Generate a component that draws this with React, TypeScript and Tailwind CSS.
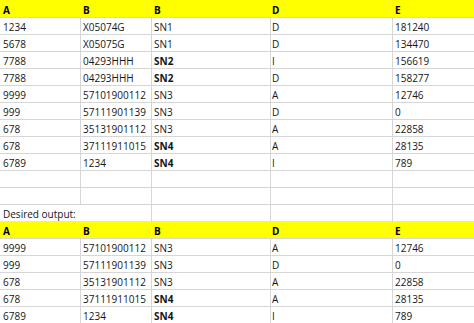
import React from "react";

type Row = [string, string, string, boolean, string, string];

const top: Row[] = [
  ["1234", "X05074G", "SN1", false, "D", "181240"],
  ["5678", "X05075G", "SN1", false, "D", "134470"],
  ["7788", "04293HHH", "SN2", true, "I", "156619"],
  ["7788", "04293HHH", "SN2", true, "D", "158277"],
  ["9999", "57101900112", "SN3", false, "A", "12746"],
  ["999", "57111901139", "SN3", false, "D", "0"],
  ["678", "35131901112", "SN3", false, "A", "22858"],
  ["678", "37111911015", "SN4", true, "A", "28135"],
  ["6789", "1234", "SN4", true, "I", "789"],
];

const bottom: Row[] = top.slice(4);

const gridCols = "grid grid-cols-[81px_71px_119px_122px_1fr]";

function Header() {
  return (
    <div className={`${gridCols} h-[17px] bg-[#ffff00] font-bold text-black leading-[12px] pt-[3.5px]`}>
      <div className="pl-[3px]">A</div>
      <div className="pl-[2px]">B</div>
      <div className="pl-[2px]">B</div>
      <div className="pl-[1px]">D</div>
      <div className="pl-[2px]">E</div>
    </div>
  );
}

function DataRow({ r }: { r: Row }) {
  const cell = "border-r border-[#d6d6d6] pt-[3px] whitespace-nowrap";
  return (
    <div className={`${gridCols} h-[17px] border-t border-[#d6d6d6] leading-[12px]`}>
      <div className={`${cell} pl-[3px]`}>{r[0]}</div>
      <div className={`${cell} pl-[2px]`}>{r[1]}</div>
      <div className={`${cell} pl-[2px] ${r[3] ? "font-bold" : ""}`}>{r[2]}</div>
      <div className={`${cell} pl-[1px]`}>{r[4]}</div>
      <div className="pt-[3px] pl-[2px]">{r[5]}</div>
    </div>
  );
}

function EmptyRow({ label }: { label?: string }) {
  const cell = "border-r border-[#d6d6d6] pt-[3px] whitespace-nowrap";
  return (
    <div className={`${gridCols} h-[17px] border-t border-[#d6d6d6] leading-[12px]`}>
      {label ? (
        <div className={`${cell} col-span-2 pl-[3px]`}>{label}</div>
      ) : (
        <>
          <div className={cell}></div>
          <div className={cell}></div>
        </>
      )}
      <div className={cell}></div>
      <div className={cell}></div>
      <div></div>
    </div>
  );
}

export default function App() {
  return (
    <div
      className="w-[474px] h-[323px] overflow-hidden bg-white text-[10px] text-[#161616]"
      style={{ fontFamily: "'Open Sans', Lato, sans-serif" }}
    >
      <Header />
      {top.map((r, i) => (
        <DataRow key={"t" + i} r={r} />
      ))}
      <EmptyRow />
      <EmptyRow />
      <EmptyRow label="Desired output:" />
      <Header />
      {bottom.map((r, i) => (
        <DataRow key={"b" + i} r={r} />
      ))}
    </div>
  );
}
